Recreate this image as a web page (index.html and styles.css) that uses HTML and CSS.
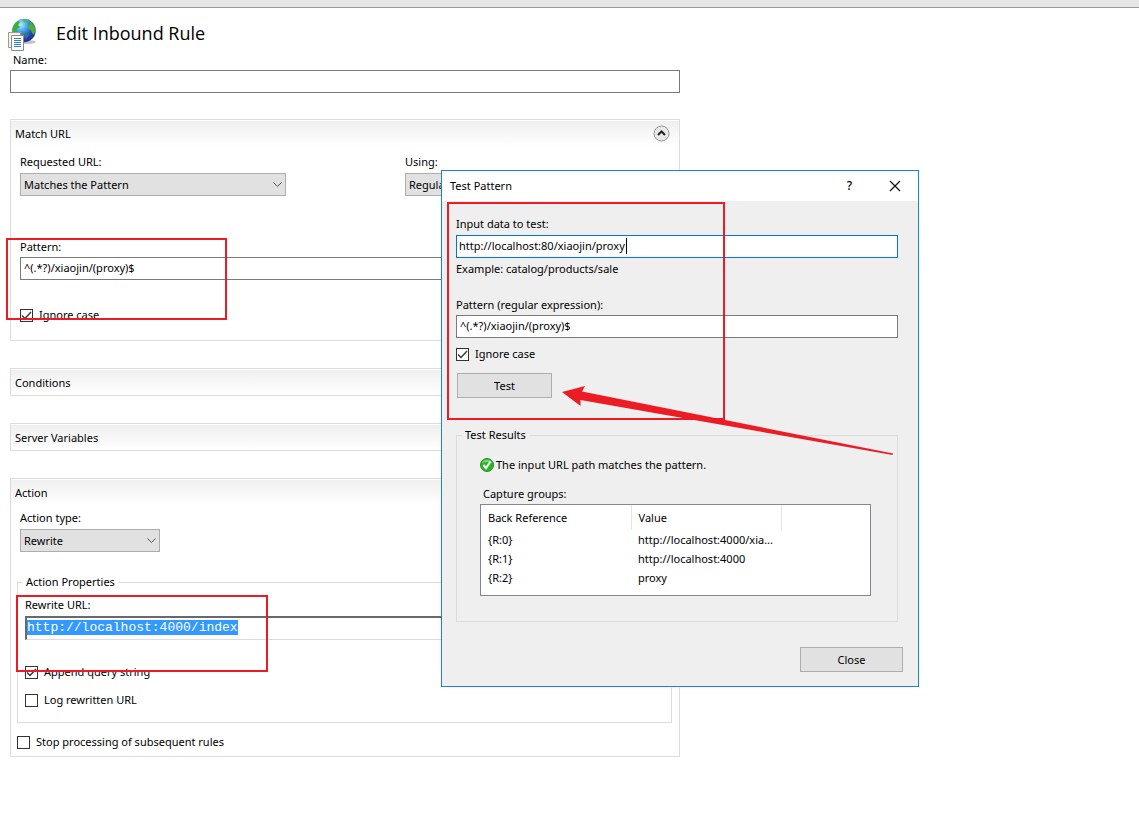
FILE: index.html
```html
<!DOCTYPE html>
<html lang="en">
<head>
<meta charset="utf-8">
<title>Edit Inbound Rule</title>
<link rel="stylesheet" href="styles.css">
</head>
<body>
<div class="topbar"></div>
<main class="page">
  <header class="page-header">
    <svg class="page-icon" width="30" height="34" viewBox="0 0 30 34" aria-hidden="true">
      <defs>
        <radialGradient id="globe" cx="0.35" cy="0.25" r="0.8">
          <stop offset="0" stop-color="#b5ecfd"/>
          <stop offset="0.35" stop-color="#45a8ea"/>
          <stop offset="0.7" stop-color="#2447c0"/>
          <stop offset="1" stop-color="#1a2b8c"/>
        </radialGradient>
      </defs>
      <ellipse cx="18" cy="24" rx="10" ry="2" fill="#c4c4c4"/>
      <circle cx="16" cy="12.500" r="11.700" fill="url(#globe)"/>
      <path d="M5 9C6 6 8 4 10 3L12 4L10 7L12 9L9 11L8 15L5 16C4 13 4 11 5 9Z" fill="#3fae3a"/>
      <path d="M14 2L18 1.500L21 3L17 4.500Z" fill="#4fbf55"/>
      <path d="M21 3C25 5 27 8 27.500 12L26 17L24 15L23 12L20 11L20 8L22 6Z" fill="#4fae35"/>
      <path d="M17 15L20 14L21 17L18 21L16 18Z" fill="#2c7a75"/>
      <path d="M0.500 14.500H12.500V29.500H0.500Z" fill="#f8f3e6" stroke="#9a9a9a"/>
      <path d="M3.500 17.500H15.500V32.500H3.500Z" fill="#fff" stroke="#8a8a8a"/>
      <path d="M6 20.500H13M6 22.500H13M6 24.500H13M6 26.500H13M6 28.500H13" stroke="#2f7fd0"/>
    </svg>
    <h1 class="page-title">Edit Inbound Rule</h1>
  </header>

  <form class="rule-form">
    <div class="field name-field">
      <label class="name-label" for="name">Name:</label>
      <input class="textbox" id="name" type="text">
    </div>

    <section class="panel">
      <div class="panel-head">
        <h2 class="panel-title">Match URL</h2>
        <button class="collapse" type="button" aria-label="Collapse">
          <svg width="17" height="17" viewBox="0 0 17 17" aria-hidden="true">
            <circle cx="8.500" cy="8.500" r="7.500" fill="#e9e9e9" stroke="#949494"/>
            <path d="M5 10L8.500 6.500L12 10" fill="none" stroke="#222" stroke-width="2"/>
          </svg>
        </button>
      </div>
      <div class="panel-body match-body">
        <div class="match-row">
          <div class="field select-field">
            <label for="requested">Requested URL:</label>
            <div class="select-wrap">
              <select id="requested"><option>Matches the Pattern</option></select>
              <svg class="chevron" width="9" height="6" viewBox="0 0 9 6" aria-hidden="true"><path d="M0.500 0.500L4.500 4.500L8.500 0.500" fill="none" stroke="#555"/></svg>
            </div>
          </div>
          <div class="field select-field">
            <label for="using">Using:</label>
            <div class="select-wrap">
              <select id="using"><option>Regular Expressions</option></select>
              <svg class="chevron" width="9" height="6" viewBox="0 0 9 6" aria-hidden="true"><path d="M0.500 0.500L4.500 4.500L8.500 0.500" fill="none" stroke="#555"/></svg>
            </div>
          </div>
        </div>
        <div class="field pattern-field">
          <label for="pattern">Pattern:</label>
          <input class="textbox" id="pattern" type="text" value="^(.*?)/xiaojin/(proxy)$">
        </div>
        <label class="check"><input type="checkbox" checked>Ignore case</label>
      </div>
    </section>

    <section class="panel">
      <div class="panel-head"><h2 class="panel-title">Conditions</h2></div>
    </section>

    <section class="panel">
      <div class="panel-head"><h2 class="panel-title">Server Variables</h2></div>
    </section>

    <section class="panel">
      <div class="panel-head"><h2 class="panel-title">Action</h2></div>
      <div class="panel-body action-body">
        <div class="field action-type">
          <label for="action">Action type:</label>
          <div class="select-wrap">
            <select id="action"><option>Rewrite</option></select>
            <svg class="chevron" width="9" height="6" viewBox="0 0 9 6" aria-hidden="true"><path d="M0.500 0.500L4.500 4.500L8.500 0.500" fill="none" stroke="#555"/></svg>
          </div>
        </div>
        <fieldset class="group action-group">
          <legend>Action Properties</legend>
          <div class="field">
            <label for="rewrite">Rewrite URL:</label>
            <input class="textbox rewrite-box" id="rewrite" type="text" value="http://localhost:4000/index" spellcheck="false">
          </div>
          <label class="check append-check"><input type="checkbox" checked>Append query string</label>
          <label class="check log-check"><input type="checkbox">Log rewritten URL</label>
        </fieldset>
        <label class="check stop-check"><input type="checkbox">Stop processing of subsequent rules</label>
      </div>
    </section>
  </form>

  <div class="dialog" role="dialog" aria-labelledby="dialog-title">
    <div class="dialog-bar">
      <h2 class="dialog-title" id="dialog-title">Test Pattern</h2>
      <button class="bar-button" type="button">?</button>
      <button class="bar-button" type="button" aria-label="Close window">
        <svg width="12" height="12" viewBox="0 0 12 12" aria-hidden="true"><path d="M1 1L11 11M11 1L1 11" stroke="#111" stroke-width="1.200"/></svg>
      </button>
    </div>
    <div class="dialog-body">
      <div class="field">
        <label for="test-input">Input data to test:</label>
        <div class="caret-wrap">
          <input class="textbox active" id="test-input" type="text" value="http://localhost:80/xiaojin/proxy">
          <span class="caret"></span>
        </div>
      </div>
      <p class="example">Example: catalog/products/sale</p>
      <div class="field regex-field">
        <label for="test-pattern">Pattern (regular expression):</label>
        <input class="textbox" id="test-pattern" type="text" value="^(.*?)/xiaojin/(proxy)$">
      </div>
      <label class="check dialog-check"><input type="checkbox" checked>Ignore case</label>
      <button class="push test-button" type="button">Test</button>
      <fieldset class="group results">
        <legend>Test Results</legend>
        <p class="result">
          <svg width="14" height="14" viewBox="0 0 14 14" aria-hidden="true">
            <circle cx="7" cy="7" r="6.500" fill="#2cb52c" stroke="#249124"/>
            <path d="M2 5A5.500 5.500 0 0 1 12 5Q7 3 2 5Z" fill="#79d679"/>
            <path d="M3.500 7L6 10L10.500 3.500" fill="none" stroke="#fff" stroke-width="2"/>
          </svg>
          The input URL path matches the pattern.
        </p>
        <p class="capture-label">Capture groups:</p>
        <div class="list">
          <table>
            <thead><tr><th>Back Reference</th><th>Value</th><th></th></tr></thead>
            <tbody>
              <tr><td>{R:0}</td><td>http://localhost:4000/xia...</td><td></td></tr>
              <tr><td>{R:1}</td><td>http://localhost:4000</td><td></td></tr>
              <tr><td>{R:2}</td><td>proxy</td><td></td></tr>
            </tbody>
          </table>
        </div>
      </fieldset>
      <div class="dialog-foot"><button class="push close-button" type="button">Close</button></div>
    </div>
  </div>

  <svg class="marks" width="940" height="700" viewBox="0 0 940 700" aria-hidden="true">
    <g fill="none" stroke="#ed1c24" stroke-width="2">
      <rect x="7" y="239" width="219" height="80"/>
      <rect x="17" y="596" width="250" height="75"/>
      <rect x="448" y="203" width="276" height="216"/>
    </g>
    <path d="M562 392L585 386L582 391.500L893 453.500L892.500 455L580.500 400L580.500 406Z" fill="#ed1c24"/>
  </svg>
</main>
<script src="page.js"></script>
</body>
</html>
```
FILE: styles.css
```css
* { box-sizing: border-box; }

body {
  margin: 0;
  background: #fff;
  color: #000;
  font: 11px/16px "Noto Sans", "Open Sans", sans-serif;
}

h1, h2, p { margin: 0; font-weight: 400; }
h2 { font-size: 11px; line-height: 16px; }
button, input, select { font: inherit; color: inherit; margin: 0; border-radius: 0; }

.topbar { height: 8px; background: #e7e5e6; border-bottom: 1px solid #999; }
.page { max-width: 690px; padding: 0 10px; }
.page-header { display: flex; align-items: flex-end; gap: 18px; height: 44px; margin-left: -2px; }
.page-icon { flex: none; }
.page-title { font-family: "Open Sans", "Noto Sans", sans-serif; font-size: 18px; line-height: 37px; }

.rule-form { display: flex; flex-direction: column; gap: 27px; }
.field { display: flex; flex-direction: column; gap: 3px; }
.name-field { gap: 2px; margin-bottom: -1px; }
.name-label { padding-left: 3px; }

.textbox {
  width: 100%;
  height: 23px;
  padding: 0 3px 2px;
  border: 1px solid #7a7a7a;
  background: #fff;
  outline: none;
}
.textbox.active { border-color: #0078d7; padding: 0 2px 2px; }

.panel { border: 1px solid #dcdcdc; }
.panel-head {
  display: flex;
  align-items: center;
  justify-content: space-between;
  height: 26px;
  padding: 0 9px 0 4px;
  background: linear-gradient(#efefef, #fff);
  border: solid #fff;
  border-width: 1px 0 0;
}
.collapse { display: flex; padding: 0; border: 0; background: none; }
.panel-body { display: flex; flex-direction: column; }
.match-body { padding: 8px 9px 17px; }
.match-row { display: grid; grid-template-columns: 266px 265px; gap: 119px; }
.pattern-field { gap: 2px; margin: 43px 0 27px; }

.select-wrap { display: grid; align-items: center; }
.select-wrap > * { grid-area: 1 / 1; }
select {
  width: 100%;
  height: 23px;
  padding: 0 3px;
  border: 1px solid #adadad;
  background: #e1e1e1;
  appearance: none;
}
.chevron { justify-self: end; margin-right: 4px; pointer-events: none; }

.check { display: flex; align-items: center; gap: 6px; }
.check input {
  flex: none;
  width: 13px;
  height: 13px;
  border: 1px solid #333;
  background: #fff center / 11px 11px no-repeat;
  appearance: none;
}
.check input:checked {
  background-image: url("data:image/svg+xml,%3Csvg xmlns='http://www.w3.org/2000/svg' viewBox='0 0 11 11'%3E%3Cpath d='M1 5.500L4 8.500L10 2' fill='none' stroke='%23333' stroke-width='1.300'/%3E%3C/svg%3E");
}

.group { min-width: 0; margin: 0; border: 1px solid #dcdcdc; }
.group legend { padding: 0 3px; }
.action-body { padding: 5px 7px 6px 6px; }
.action-type { width: 143px; padding-left: 3px; }
.action-group { margin-top: 22px; padding: 7px 7px 14px; }
.action-group legend { margin-left: -2px; }
.rewrite-box {
  height: 24px;
  padding: 0 0 2px;
  border: solid #dcdcdc;
  border-width: 2px 1px 1px 2px;
  border-top-color: #696969;
  border-left-color: #696969;
  font: 13px/18px "Liberation Mono", monospace;
}
.rewrite-box::selection { background: #3399ff; color: #fff; }
.append-check { margin-top: 24px; }
.log-check { margin-top: 12px; }
.stop-check { margin-top: 11px; }

.dialog {
  position: absolute;
  left: 441px;
  top: 170px;
  width: 478px;
  border: 1px solid #1883d7;
  background: #efefef;
}
.dialog-bar { display: flex; align-items: center; height: 30px; padding: 0 1px 0 8px; background: #fff; }
.dialog-title { flex: 1; }
.bar-button {
  display: flex;
  align-items: center;
  justify-content: center;
  width: 45px;
  height: 29px;
  padding: 0;
  border: 0;
  background: none;
  font-size: 12px;
  font-weight: 500;
}
.dialog-body { padding: 15px 20px 14px 14px; }
.caret-wrap { position: relative; display: flex; }
.caret { position: absolute; left: 170px; top: 3px; width: 1px; height: 16px; background: #000; }
.example { margin-top: 3px; }
.regex-field { gap: 2px; margin-top: 20px; }
.dialog-check { margin-top: 8px; }
.push { border: 1px solid #adadad; background: #e1e1e1; padding: 0; }
.test-button { display: block; width: 95px; height: 25px; margin: 11px 0 0 1px; }
.results { margin-top: 29px; padding: 14px 26px 25px 23px; }
.results legend { margin-left: -18px; }
.result { display: flex; align-items: center; gap: 2px; }
.capture-label { margin: 13px 0 2px 3px; }
.list { height: 92px; border: 1px solid #828790; background: #fff; }
table { width: 100%; border-collapse: collapse; table-layout: fixed; }
th, td { height: 19px; padding: 0 0 0 7px; text-align: left; font-weight: 400; white-space: nowrap; }
th { height: 25px; border-right: 1px solid #e5e5e5; }
th:nth-child(1), th:nth-child(2) { width: 150px; }
th:last-child { width: auto; border-right: 0; }
.dialog-foot { display: flex; justify-content: flex-end; margin: 25px -5px 0 0; }
.close-button { width: 103px; height: 25px; }

.marks { position: absolute; left: 0; top: 0; pointer-events: none; }
```
FILE: page.js
```js
const rewrite = document.getElementById("rewrite");
rewrite.focus({ preventScroll: true });
rewrite.select();
```
